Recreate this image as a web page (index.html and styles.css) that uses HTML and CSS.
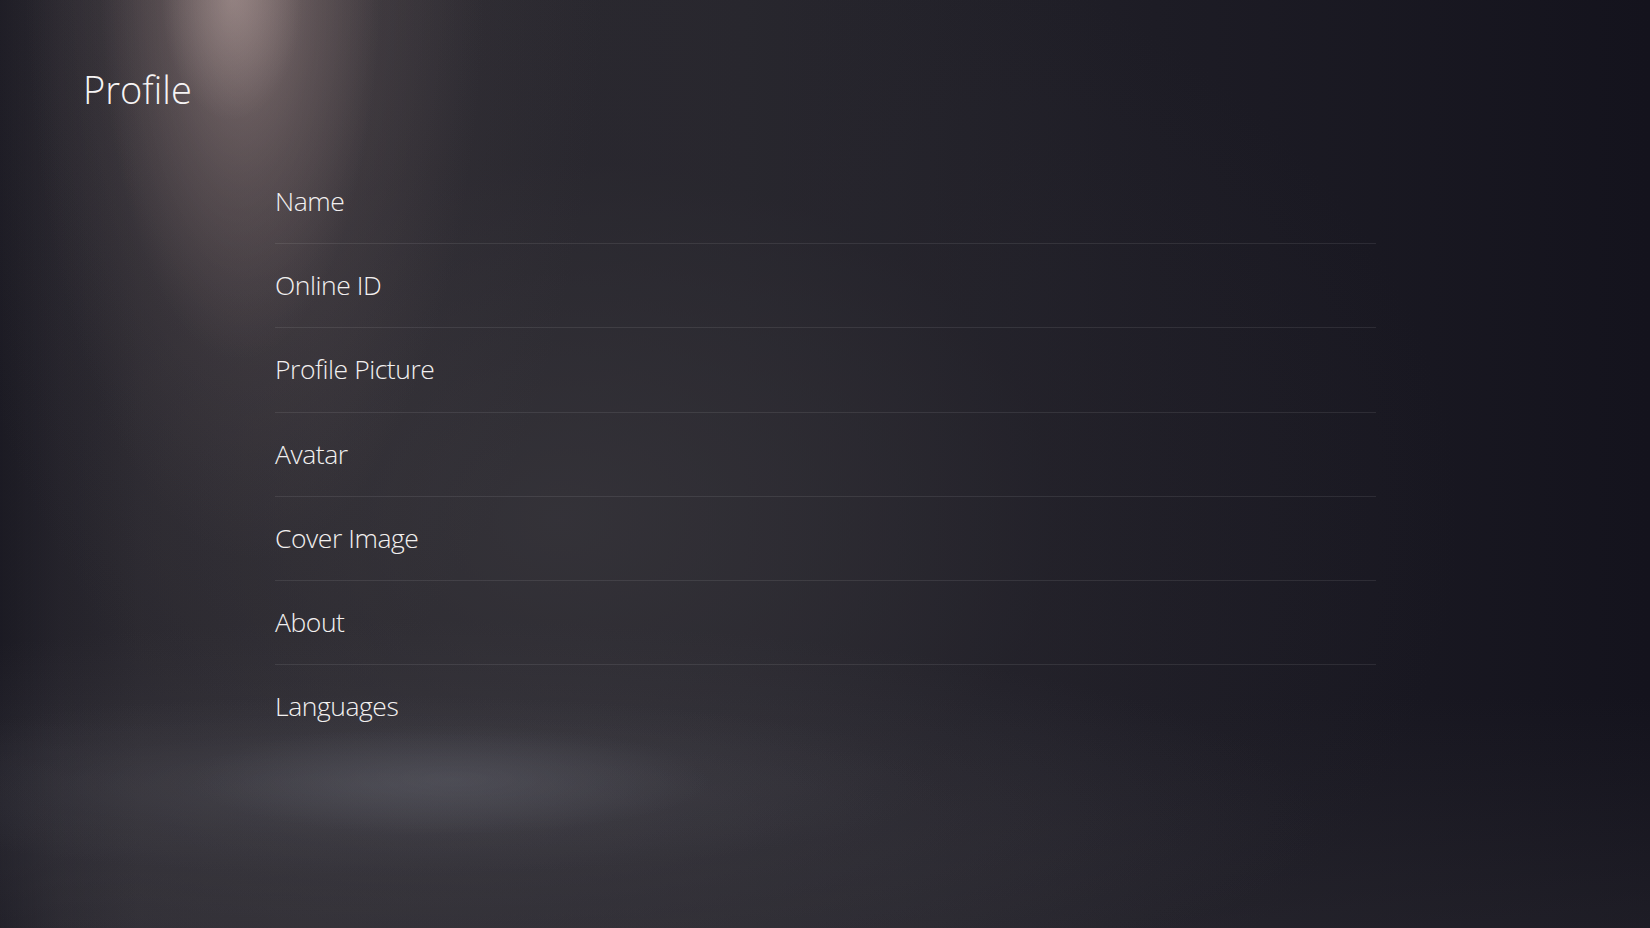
FILE: index.html
```html
<!DOCTYPE html>
<html lang="en">
<head>
<meta charset="utf-8">
<title>Profile</title>
<link rel="stylesheet" href="styles.css">
</head>
<body>
<div class="screen">
  <div class="glow glow-spot"></div>
  <div class="glow glow-fog"></div>
  <main class="content">
    <h1 class="title">Profile</h1>
    <ul class="menu">
      <li class="menu-item">Name</li>
      <li class="menu-item">Online ID</li>
      <li class="menu-item">Profile Picture</li>
      <li class="menu-item">Avatar</li>
      <li class="menu-item">Cover Image</li>
      <li class="menu-item">About</li>
      <li class="menu-item">Languages</li>
    </ul>
  </main>
</div>
</body>
</html>
```

FILE: styles.css
```css
html, body {
  margin: 0;
  padding: 0;
  width: 100%;
  height: 100%;
  overflow: hidden;
}

body {
  font-family: "Open Sans", "Noto Sans", "Liberation Sans", sans-serif;
  color: #f2f0f0;
  background: #15141d;
}

.screen {
  position: relative;
  width: 1650px;
  height: 928px;
  overflow: hidden;
  background:
    linear-gradient(90deg, rgba(16, 16, 26, 0.55) 0px, rgba(16, 16, 26, 0.2) 60px, rgba(16, 16, 26, 0) 140px),
    linear-gradient(180deg, rgba(0, 0, 0, 0) 0%, rgba(0, 0, 0, 0) 75%, rgba(60, 58, 64, 0.25) 100%),
    radial-gradient(ellipse 900px 650px at 560px 520px, rgba(56, 54, 60, 0.7) 0%, rgba(40, 38, 46, 0.35) 55%, rgba(20, 19, 28, 0) 100%),
    linear-gradient(90deg, #2a282f 0%, #2d2b31 20%, #28272e 45%, #1d1c25 70%, #14131d 100%);
}

.glow {
  position: absolute;
  pointer-events: none;
}

.glow-spot {
  left: 0;
  top: 0;
  width: 800px;
  height: 800px;
  background:
    radial-gradient(ellipse 70px 120px at 232px 0px, rgba(185, 165, 162, 0.4) 0%, rgba(185, 165, 162, 0) 100%),
    radial-gradient(ellipse 140px 380px at 240px -20px, rgba(160, 138, 136, 0.55) 0%, rgba(140, 120, 120, 0.26) 55%, rgba(120, 100, 100, 0) 100%),
    radial-gradient(ellipse 230px 600px at 255px -40px, rgba(120, 104, 104, 0.45) 0%, rgba(100, 88, 90, 0.22) 55%, rgba(90, 80, 84, 0) 100%),
    radial-gradient(ellipse 340px 780px at 265px -60px, rgba(92, 82, 86, 0.32) 0%, rgba(80, 72, 78, 0.12) 60%, rgba(70, 64, 70, 0) 100%);
}

.glow-fog {
  left: 0;
  top: 620px;
  width: 1400px;
  height: 308px;
  background:
    radial-gradient(ellipse 260px 55px at 450px 160px, rgba(105, 108, 120, 0.28) 0%, rgba(95, 98, 110, 0) 100%),
    radial-gradient(ellipse 560px 90px at 380px 165px, rgba(100, 100, 108, 0.3) 0%, rgba(90, 90, 98, 0.1) 60%, rgba(80, 80, 90, 0) 100%),
    radial-gradient(ellipse 900px 200px at 420px 200px, rgba(78, 76, 84, 0.35) 0%, rgba(70, 68, 76, 0) 100%);
}

.content {
  position: relative;
  display: flex;
  flex-direction: column;
  padding: 70px 0 0 83px;
}

.title {
  margin: 0;
  font-size: 38px;
  line-height: 38px;
  font-weight: 300;
  letter-spacing: 0;
  color: #f6f4f4;
}

.menu {
  list-style: none;
  margin: 52px 0 0 192px;
  padding: 0;
  width: 1101px;
  display: flex;
  flex-direction: column;
}

.menu-item {
  box-sizing: border-box;
  height: 84.2px;
  padding-top: 27px;
  font-size: 26.5px;
  line-height: 28px;
  font-weight: 300;
  letter-spacing: -0.45px;
  color: #f2f0f0;
  border-bottom: 1.5px solid rgba(255, 255, 255, 0.085);
}

.menu-item:last-child {
  border-bottom: none;
}
```
